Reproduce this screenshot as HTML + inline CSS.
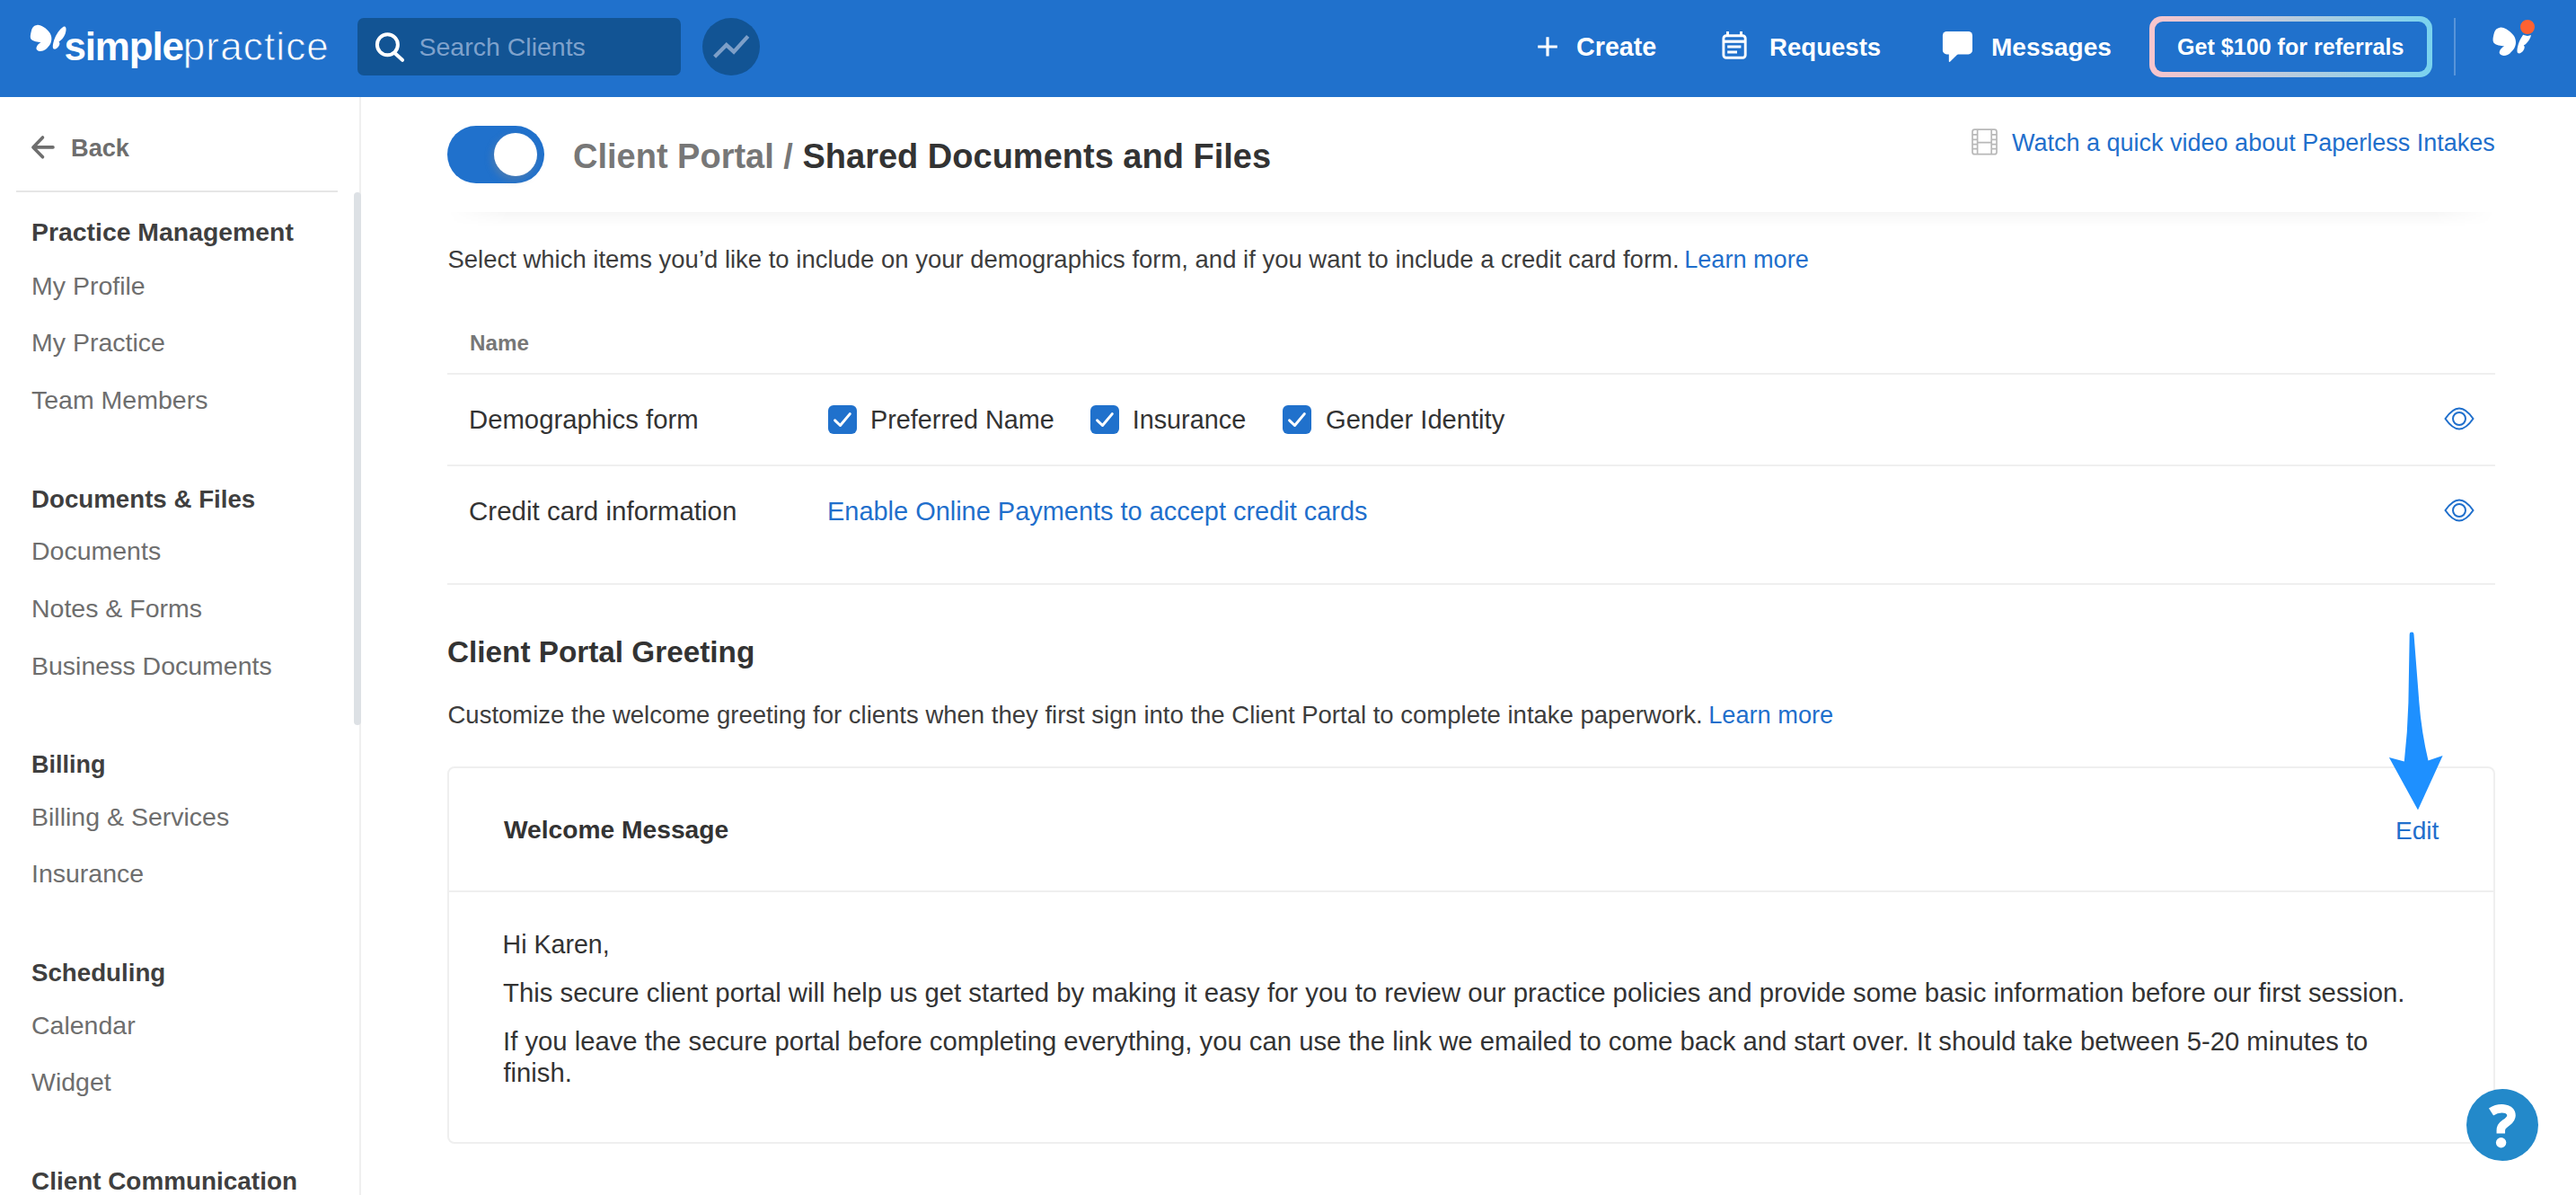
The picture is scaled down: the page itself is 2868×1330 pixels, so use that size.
<!DOCTYPE html><html><head><meta charset="utf-8"><style>
html,body{margin:0;padding:0;background:#fff;}
body{width:2868px;height:1330px;position:relative;overflow:hidden;font-family:"Liberation Sans",sans-serif;}
.t{position:absolute;white-space:nowrap;}
.a{position:absolute;}
</style></head><body>
<div class="a" style="left:0;top:0;width:2868px;height:108px;background:#2071cc"></div>
<svg class="a" style="left:25px;top:20px" width="60" height="50" viewBox="0 0 60 50" fill="#fff"><path d="M16 8 C20 7 26 11 30 16 C33 20 33 25 31 29 C28 34 24 37 20 37 C17 37 15 35 15.5 33 C16 30 19 28 20.5 27 C17 27 12 26 10 24 C8 22 9 18 10 14 C11 10 13 8.5 16 8 Z"/><path d="M47 9.5 C49 10 49 14 47.5 18 C46 22 43 25 40.5 26.5 C41.8 27.5 41.8 29.5 40 32 C38.5 34 36.5 35 35 34.5 C33.5 34 33.5 31 34.5 27 C36 21 40 14 44 11 C45 10 46 9.3 47 9.5 Z"/></svg>
<div class="t" style="left:71.5px;top:24.60px;font-size:44px;line-height:53px;font-weight:400;color:#fff;"><b style="font-weight:700;letter-spacing:-1.2px">simple</b><span style="font-weight:400;letter-spacing:1.15px;-webkit-text-stroke:0.8px #2071cc">practice</span></div>
<div class="a" style="left:398px;top:20px;width:360px;height:64px;border-radius:7px;background:#125494"></div>
<svg class="a" style="left:400px;top:20px" width="60" height="60" viewBox="0 0 60 60"><circle cx="31.4" cy="29.8" r="11.5" fill="none" stroke="#fff" stroke-width="4"/><line x1="40" y1="39.5" x2="48" y2="46.8" stroke="#fff" stroke-width="4" stroke-linecap="round"/></svg>
<div class="t" style="left:466.5px;top:35.00px;font-size:28.5px;line-height:34px;font-weight:400;color:#7fa2cc;">Search Clients</div>
<div class="a" style="left:782px;top:20px;width:64px;height:64px;border-radius:50%;background:#125494"></div>
<svg class="a" style="left:774px;top:15px" width="80" height="75" viewBox="0 0 80 75"><polyline points="21.6,48.3 34.8,35.1 43,42.7 58.7,25.4" fill="none" stroke="#7d9fc8" stroke-width="4.3"/></svg>
<svg class="a" style="left:1700px;top:30px" width="50" height="50" viewBox="0 0 50 50"><path d="M23 11.3 V32.5 M12.2 22 H33.8" stroke="#fff" stroke-width="3.2"/></svg>
<div class="t" style="left:1755px;top:35.00px;font-size:28.7px;line-height:34px;font-weight:700;color:#fff;">Create</div>
<svg class="a" style="left:1900px;top:25px" width="60" height="55" viewBox="0 0 60 55"><rect x="18.9" y="14.7" width="24.3" height="24.6" rx="3" fill="none" stroke="#fff" stroke-width="2.9"/><rect x="18.9" y="19.6" width="24.3" height="3.2" fill="#fff"/><rect x="22" y="10" width="3" height="6" fill="#fff"/><rect x="37" y="10" width="3" height="6" fill="#fff"/><rect x="23.2" y="25.5" width="15.2" height="3" fill="#fff"/><rect x="23.2" y="31.5" width="10.8" height="3" fill="#fff"/></svg>
<div class="t" style="left:1970px;top:36.00px;font-size:27.6px;line-height:33px;font-weight:700;color:#fff;">Requests</div>
<svg class="a" style="left:2150px;top:25px" width="60" height="55" viewBox="0 0 60 55"><rect x="12.9" y="9.9" width="33.1" height="25.5" rx="4.5" fill="#fff"/><path d="M19.8 34 L19.8 43.5 Q20.3 44.3 21 43.7 L31 34 Z" fill="#fff"/></svg>
<div class="t" style="left:2217px;top:35.50px;font-size:28px;line-height:34px;font-weight:700;color:#fff;">Messages</div>
<div class="a" style="left:2393px;top:18px;width:315px;height:68px;border-radius:14px;background:linear-gradient(90deg,#f9c5cc,#79d3ef);"></div>
<div class="a" style="left:2399px;top:24px;width:303px;height:56px;border-radius:9px;background:#2071cc;"></div>
<div class="t" style="left:2424px;top:37.00px;font-size:25.1px;line-height:30px;font-weight:700;color:#fff;">Get $100 for referrals</div>
<div class="a" style="left:2732px;top:20px;width:2px;height:64px;background:rgba(255,255,255,0.25)"></div>
<svg class="a" style="left:2765.6px;top:21.9px" width="64.8" height="54" viewBox="0 0 60 50" fill="#fff"><path d="M16 8 C20 7 26 11 30 16 C33 20 33 25 31 29 C28 34 24 37 20 37 C17 37 15 35 15.5 33 C16 30 19 28 20.5 27 C17 27 12 26 10 24 C8 22 9 18 10 14 C11 10 13 8.5 16 8 Z"/><path d="M47 9.5 C49 10 49 14 47.5 18 C46 22 43 25 40.5 26.5 C41.8 27.5 41.8 29.5 40 32 C38.5 34 36.5 35 35 34.5 C33.5 34 33.5 31 34.5 27 C36 21 40 14 44 11 C45 10 46 9.3 47 9.5 Z"/></svg>
<div class="a" style="left:2803.8px;top:19.5px;width:16.4px;height:16.4px;border-radius:50%;background:#fe6232;border:2px solid #2071cc"></div>
<div class="a" style="left:400px;top:108px;width:2px;height:1222px;background:#efefef"></div>
<svg class="a" style="left:30px;top:145px" width="40" height="40" viewBox="0 0 40 40"><path d="M29 18.9 H7.5 M17.5 8 L6.9 18.9 L17.5 29.8" fill="none" stroke="#6e6e6e" stroke-width="3.6" stroke-linecap="round" stroke-linejoin="round"/></svg>
<div class="t" style="left:79px;top:148.00px;font-size:27.2px;line-height:33px;font-weight:700;color:#6e6e6e;">Back</div>
<div class="a" style="left:18px;top:212px;width:358px;height:2px;background:#e6e6e6"></div>
<div class="a" style="left:394px;top:214px;width:8px;height:593px;border-radius:4px;background:#dde1e5"></div>
<div class="t" style="left:35px;top:240.50px;font-size:28.4px;line-height:34px;font-weight:700;color:#3f3f3f;">Practice Management</div>
<div class="t" style="left:35px;top:300.50px;font-size:28.5px;line-height:34px;font-weight:400;color:#6e6e6e;">My Profile</div>
<div class="t" style="left:35px;top:364.00px;font-size:28.5px;line-height:34px;font-weight:400;color:#6e6e6e;">My Practice</div>
<div class="t" style="left:35px;top:428.00px;font-size:28.5px;line-height:34px;font-weight:400;color:#6e6e6e;">Team Members</div>
<div class="t" style="left:35px;top:538.50px;font-size:27.7px;line-height:33px;font-weight:700;color:#3f3f3f;">Documents &amp; Files</div>
<div class="t" style="left:35px;top:595.70px;font-size:28.5px;line-height:34px;font-weight:400;color:#6e6e6e;">Documents</div>
<div class="t" style="left:35px;top:660.40px;font-size:28.5px;line-height:34px;font-weight:400;color:#6e6e6e;">Notes &amp; Forms</div>
<div class="t" style="left:35px;top:724.00px;font-size:28.5px;line-height:34px;font-weight:400;color:#6e6e6e;">Business Documents</div>
<div class="t" style="left:35px;top:835.00px;font-size:27.0px;line-height:32px;font-weight:700;color:#3f3f3f;">Billing</div>
<div class="t" style="left:35px;top:891.70px;font-size:28.5px;line-height:34px;font-weight:400;color:#6e6e6e;">Billing &amp; Services</div>
<div class="t" style="left:35px;top:955.00px;font-size:28.5px;line-height:34px;font-weight:400;color:#6e6e6e;">Insurance</div>
<div class="t" style="left:35px;top:1066.00px;font-size:27.7px;line-height:33px;font-weight:700;color:#3f3f3f;">Scheduling</div>
<div class="t" style="left:35px;top:1124.00px;font-size:28.5px;line-height:34px;font-weight:400;color:#6e6e6e;">Calendar</div>
<div class="t" style="left:35px;top:1187.00px;font-size:28.5px;line-height:34px;font-weight:400;color:#6e6e6e;">Widget</div>
<div class="t" style="left:35px;top:1298.00px;font-size:27.9px;line-height:33px;font-weight:700;color:#3f3f3f;">Client Communication</div>
<div class="a" style="left:498px;top:140px;width:108px;height:64px;border-radius:32px;background:#2071cc"></div>
<div class="a" style="left:550px;top:148px;width:48px;height:48px;border-radius:50%;background:#fff;box-shadow:-2px 4px 9px rgba(140,140,140,0.4)"></div>
<div class="t" style="left:638px;top:151.00px;font-size:38px;line-height:46px;font-weight:700;color:#333333;"><span style="color:#777;font-weight:700">Client Portal / </span>Shared Documents and Files</div>
<svg class="a" style="left:2185px;top:135px" width="50" height="45" viewBox="0 0 50 45"><g fill="none" stroke="#b8b8b8" stroke-width="1.7"><rect x="11" y="9.2" width="27" height="27.5" rx="2.5"/><path d="M16.6 9.2 V36.7 M32.2 9.2 V36.7 M16.6 23.7 H32.2 M11 14.9 H16.6 M11 20.3 H16.6 M11 25.6 H16.6 M11 30.7 H16.6 M32.2 14.9 H38 M32.2 20.3 H38 M32.2 25.6 H38 M32.2 30.7 H38"/></g></svg>
<div class="t" style="left:2240px;top:143.00px;font-size:27px;line-height:32px;font-weight:400;color:#1f6fcc;">Watch a quick video about Paperless Intakes</div>
<div class="a" style="left:498px;top:236px;width:2280px;height:16px;background:linear-gradient(180deg,rgba(0,0,0,0.035),rgba(0,0,0,0));-webkit-mask-image:linear-gradient(90deg,transparent,#000 3%,#000 97%,transparent)"></div>
<div class="t" style="left:498.5px;top:271.50px;font-size:27.47px;line-height:33px;font-weight:400;color:#3d3d3d;">Select which items you’d like to include on your demographics form, and if you want to include a credit card form. <span style="color:#1f6fcc;font-size:27.1px;margin-left:-2px">Learn more</span></div>
<div class="t" style="left:523px;top:367.00px;font-size:24.2px;line-height:29px;font-weight:700;color:#777;">Name</div>
<div class="a" style="left:498px;top:414.5px;width:2280px;height:2px;background:#efefef"></div>
<div class="a" style="left:498px;top:517px;width:2280px;height:2px;background:#efefef"></div>
<div class="a" style="left:498px;top:649px;width:2280px;height:2px;background:#efefef"></div>
<div class="t" style="left:522px;top:448.80px;font-size:29.3px;line-height:35px;font-weight:400;color:#333333;">Demographics form</div>
<svg class="a" style="left:922px;top:451px" width="32" height="32" viewBox="0 0 32 32"><rect width="32" height="32" rx="6" fill="#2071cc"/><path d="M7.6 16.9 L13.5 22.5 L24.3 9.6" fill="none" stroke="#fff" stroke-width="3" stroke-linecap="round" stroke-linejoin="round"/></svg>
<div class="t" style="left:969px;top:450.00px;font-size:28.8px;line-height:35px;font-weight:400;color:#333333;">Preferred Name</div>
<svg class="a" style="left:1214.3px;top:451px" width="32" height="32" viewBox="0 0 32 32"><rect width="32" height="32" rx="6" fill="#2071cc"/><path d="M7.6 16.9 L13.5 22.5 L24.3 9.6" fill="none" stroke="#fff" stroke-width="3" stroke-linecap="round" stroke-linejoin="round"/></svg>
<div class="t" style="left:1260.7px;top:450.00px;font-size:28.8px;line-height:35px;font-weight:400;color:#333333;">Insurance</div>
<svg class="a" style="left:1428px;top:451px" width="32" height="32" viewBox="0 0 32 32"><rect width="32" height="32" rx="6" fill="#2071cc"/><path d="M7.6 16.9 L13.5 22.5 L24.3 9.6" fill="none" stroke="#fff" stroke-width="3" stroke-linecap="round" stroke-linejoin="round"/></svg>
<div class="t" style="left:1476px;top:450.00px;font-size:29.15px;line-height:35px;font-weight:400;color:#333333;">Gender Identity</div>
<svg class="a" style="left:2718px;top:445.5px" width="40" height="40" viewBox="0 0 40 40"><path d="M4.5 20 C9 13.5 14 8.5 20 8.5 C26 8.5 31 13.5 35.5 20 C31 26.5 26 31.5 20 31.5 C14 31.5 9 26.5 4.5 20 Z" fill="none" stroke="#1f6fcc" stroke-width="2"/><circle cx="20" cy="20" r="7" fill="none" stroke="#1f6fcc" stroke-width="2"/></svg>
<svg class="a" style="left:2718px;top:547.5px" width="40" height="40" viewBox="0 0 40 40"><path d="M4.5 20 C9 13.5 14 8.5 20 8.5 C26 8.5 31 13.5 35.5 20 C31 26.5 26 31.5 20 31.5 C14 31.5 9 26.5 4.5 20 Z" fill="none" stroke="#1f6fcc" stroke-width="2"/><circle cx="20" cy="20" r="7" fill="none" stroke="#1f6fcc" stroke-width="2"/></svg>
<div class="t" style="left:522px;top:551.00px;font-size:29.5px;line-height:35px;font-weight:400;color:#333333;">Credit card information</div>
<div class="t" style="left:921px;top:551.50px;font-size:28.95px;line-height:35px;font-weight:400;color:#1f6fcc;">Enable Online Payments to accept credit cards</div>
<div class="t" style="left:498px;top:706.20px;font-size:33.3px;line-height:40px;font-weight:700;color:#333333;">Client Portal Greeting</div>
<div class="t" style="left:498.5px;top:779.40px;font-size:27.5px;line-height:33px;font-weight:400;color:#3d3d3d;">Customize the welcome greeting for clients when they first sign into the Client Portal to complete intake paperwork. <span style="color:#1f6fcc;font-size:27.2px;margin-left:-1px">Learn more</span></div>
<div class="a" style="left:498px;top:853px;width:2276px;height:416px;border:2px solid #efefef;border-radius:8px"></div>
<div class="a" style="left:500px;top:990.5px;width:2276px;height:2px;background:#efefef"></div>
<div class="t" style="left:561px;top:906.30px;font-size:28.2px;line-height:34px;font-weight:700;color:#333333;">Welcome Message</div>
<div class="t" style="left:2667px;top:907.50px;font-size:28.1px;line-height:34px;font-weight:400;color:#1f6fcc;">Edit</div>
<div class="t" style="left:559.5px;top:1034.20px;font-size:28.6px;line-height:34px;font-weight:400;color:#333333;">Hi Karen,</div>
<div class="t" style="left:560px;top:1087.00px;font-size:29.33px;line-height:35px;font-weight:400;color:#333333;">This secure client portal will help us get started by making it easy for you to review our practice policies and provide some basic information before our first session.</div>
<div class="t" style="left:560px;top:1141.50px;font-size:29.25px;line-height:35px;font-weight:400;color:#333333;">If you leave the secure portal before completing everything, you can use the link we emailed to come back and start over. It should take between 5-20 minutes to</div>
<div class="t" style="left:560.5px;top:1176.50px;font-size:29.2px;line-height:35px;font-weight:400;color:#333333;">finish.</div>
<div class="a" style="left:2746px;top:1212px;width:80px;height:80px;border-radius:50%;background:#2389ca"></div>
<svg class="a" style="left:2700px;top:1180px" width="168" height="150" viewBox="0 0 168 150"><path d="M73.5 57.5 C79 54 84 53.5 88 54 C93 54.5 96 57.5 96 61.5 C96 66 92 68.5 89 70.5 C86 72.5 84.3 74.5 84.3 78 V81.6" fill="none" stroke="#fff" stroke-width="9.5"/><circle cx="84.6" cy="91.7" r="5.7" fill="#fff"/></svg>
<svg class="a" style="left:2640px;top:690px" width="100" height="230" viewBox="0 0 100 230"><path d="M42.7 16 A2.4 2.4 0 0 1 47.5 16 L53.4 92 Q56 125 63.5 156.5 L79.6 151 L52 211.4 L19.9 152.9 L36.8 157.5 Q40.5 125 41.4 92 Z" fill="#1e90ff"/></svg>
</body></html>
